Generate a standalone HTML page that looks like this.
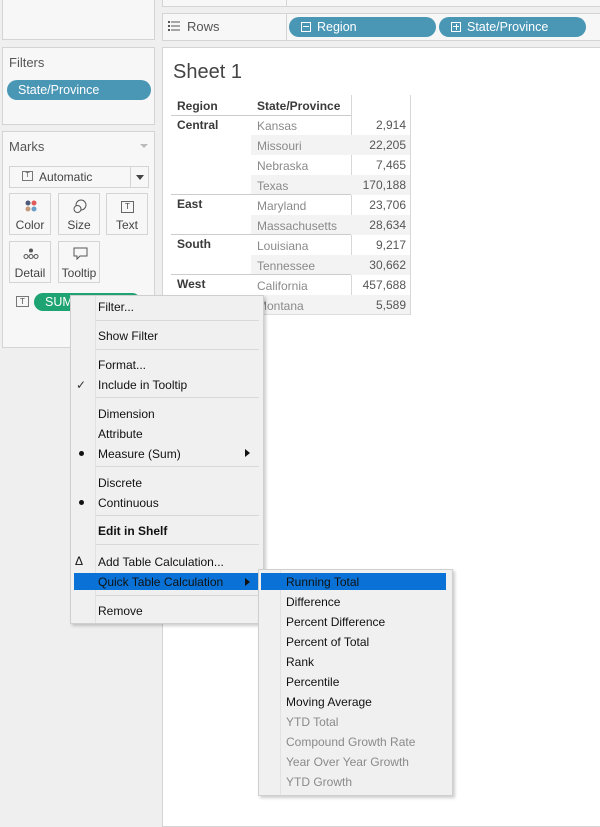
<!DOCTYPE html><html><head><style>
*{margin:0;padding:0;box-sizing:border-box}
body{width:600px;height:824px;position:relative;background:#efefef;font-family:"Liberation Sans",sans-serif;font-size:12px;color:#333;overflow:hidden}
.a{position:absolute}
.panel{position:absolute;background:#f7f7f7;border:1px solid #d4d4d4}
.pill{position:absolute;height:20px;border-radius:10px;color:#fff;font-size:12.5px;line-height:20px}
.btn{position:absolute;width:42px;height:42px;border:1px solid #d4d4d4;background:#f7f7f7;text-align:center;font-size:12px;color:#444}
.btn span{position:absolute;left:0;right:0;top:24px}
.t{position:absolute;font-size:12px;white-space:nowrap}
.b{font-weight:bold;color:#3a3a3a}
.m{position:absolute;left:98px;font-size:12px;color:#111;white-space:nowrap}
.sep{position:absolute;left:96px;width:163px;height:1px;background:#d8d8d8}
.s{position:absolute;left:286px;font-size:12px;color:#111;white-space:nowrap}
.g{color:#8a8a8a}
</style></head><body>
<div class="panel" style="left:2px;top:-2px;width:153px;height:42px"></div>
<div class="panel" style="left:162px;top:-2px;width:440px;height:9px;background:#f7f7f7"></div>
<div class="a" style="left:286px;top:-2px;width:1px;height:9px;background:#d4d4d4"></div>
<div class="panel" style="left:162px;top:13px;width:440px;height:28px"></div>
<div class="a" style="left:286px;top:14px;width:1px;height:26px;background:#d4d4d4"></div>
<svg class="a" style="left:168px;top:21px" width="12" height="10"><g fill="#555"><rect x="0" y="0" width="2" height="2"/><rect x="0" y="4" width="2" height="2"/><rect x="0" y="8" width="2" height="2"/><rect x="3" y="0.5" width="9" height="1"/><rect x="3" y="4.5" width="9" height="1"/><rect x="3" y="8.5" width="9" height="1"/></g></svg>
<div class="t" style="left:187px;top:19px;font-size:13px;color:#555">Rows</div>
<div class="pill" style="left:289px;top:17px;width:147px;background:#4a96b5"><span style="position:absolute;left:12px;top:5px;width:10px;height:10px;border:1px solid #fff"></span><span style="position:absolute;left:14px;top:9px;width:6px;height:1px;background:#fff"></span><span style="position:absolute;left:28px">Region</span></div>
<div class="pill" style="left:439px;top:17px;width:147px;background:#4a96b5"><span style="position:absolute;left:12px;top:5px;width:10px;height:10px;border:1px solid #fff"></span><span style="position:absolute;left:14px;top:9px;width:6px;height:1px;background:#fff"></span><span style="position:absolute;left:16.5px;top:6.5px;width:1px;height:6px;background:#fff"></span><span style="position:absolute;left:28px">State/Province</span></div>

<div class="panel" style="left:2px;top:47px;width:153px;height:78px"></div>
<div class="t" style="left:9px;top:55px;font-size:13px;color:#555">Filters</div>
<div class="pill" style="left:7px;top:80px;width:144px;background:#4a96b5"><span style="position:absolute;left:11px">State/Province</span></div>

<div class="panel" style="left:2px;top:131px;width:153px;height:217px"></div>
<div class="t" style="left:9px;top:139px;font-size:13px;color:#555">Marks</div>
<div class="a" style="left:140px;top:144px;border:4px solid transparent;border-top:4px solid #bbb"></div>
<div class="a" style="left:9px;top:166px;width:140px;height:22px;border:1px solid #d4d4d4;background:#f7f7f7"></div>
<div class="a" style="left:130px;top:167px;width:1px;height:20px;background:#d4d4d4"></div>
<div class="a" style="left:136px;top:175px;border:4px solid transparent;border-top:5px solid #444"></div>
<div class="a" style="left:22px;top:171px;width:11px;height:10px;border:1px solid #777;font-size:7px;line-height:8px;text-align:center;color:#555">T</div>
<div class="t" style="left:39px;top:170px;color:#444">Automatic</div>
<div class="btn" style="left:9px;top:193px"><svg style="position:absolute;left:15px;top:6px" width="12" height="12"><circle cx="3" cy="3" r="2.5" fill="#4e5a7a"/><circle cx="9" cy="3" r="2.5" fill="#e05a5a"/><circle cx="3" cy="9" r="2.5" fill="#c49a7a"/><circle cx="9" cy="9" r="2.5" fill="#6aa0c8"/></svg><span>Color</span></div>
<div class="btn" style="left:58px;top:193px"><svg style="position:absolute;left:14px;top:5px" width="14" height="14"><circle cx="8" cy="6" r="5" fill="none" stroke="#555"/><circle cx="4.5" cy="10" r="3.5" fill="#f7f7f7" stroke="#555"/></svg><span>Size</span></div>
<div class="btn" style="left:106px;top:193px"><div style="position:absolute;left:14px;top:7px;width:13px;height:12px;border:1px solid #666;font-size:8px;line-height:10px">T</div><span>Text</span></div>
<div class="btn" style="left:9px;top:241px"><svg style="position:absolute;left:13px;top:6px" width="16" height="12"><circle cx="8" cy="2.5" r="2" fill="#555"/><circle cx="3" cy="8.5" r="2" fill="none" stroke="#555"/><circle cx="8" cy="8.5" r="2" fill="none" stroke="#555"/><circle cx="13" cy="8.5" r="2" fill="none" stroke="#555"/></svg><span>Detail</span></div>
<div class="btn" style="left:58px;top:241px"><svg style="position:absolute;left:14px;top:5px" width="16" height="14"><path d="M1 1h13v8h-7l-3 3v-3h-3z" fill="none" stroke="#555"/></svg><span>Tooltip</span></div>
<div class="a" style="left:16px;top:296px;width:13px;height:11px;border:1px solid #777;font-size:8px;line-height:9px;text-align:center;color:#555">T</div>
<div class="pill" style="left:34px;top:293px;width:107px;height:18px;line-height:18px;background:#1ea373"><span style="position:absolute;left:11px">SUM</span></div>

<div class="a" style="left:162px;top:47px;width:440px;height:780px;background:#fff;border:1px solid #d4d4d4"></div>
<div class="t" style="left:173px;top:61px;font-size:20px;color:#444">Sheet 1</div>
<div class="a" style="left:351px;top:95px;width:1px;height:220px;background:#d8d8d8"></div>
<div class="a" style="left:410px;top:95px;width:1px;height:220px;background:#d8d8d8"></div>
<div class="t b" style="left:177px;top:99px">Region</div>
<div class="t b" style="left:257px;top:99px">State/Province</div>
<div class="a" style="left:171px;top:115px;width:180px;height:1px;background:#ccc"></div>
<div class="a" style="left:251px;top:135px;width:159px;height:20px;background:#f3f3f3"></div>
<div class="a" style="left:251px;top:175px;width:159px;height:20px;background:#f3f3f3"></div>
<div class="a" style="left:251px;top:215px;width:159px;height:20px;background:#f3f3f3"></div>
<div class="a" style="left:251px;top:255px;width:159px;height:20px;background:#f3f3f3"></div>
<div class="a" style="left:251px;top:295px;width:159px;height:20px;background:#f3f3f3"></div>
<div class="a" style="left:171px;top:194px;width:180px;height:1px;background:#ccc"></div>
<div class="a" style="left:171px;top:234px;width:180px;height:1px;background:#ccc"></div>
<div class="a" style="left:171px;top:274px;width:180px;height:1px;background:#ccc"></div>
<div class="a" style="left:251px;top:314px;width:160px;height:1px;background:#ddd"></div>
<div class="t b" style="left:177px;top:118px">Central</div>
<div class="t b" style="left:177px;top:197px">East</div>
<div class="t b" style="left:177px;top:237px">South</div>
<div class="t b" style="left:177px;top:277px">West</div>
<div class="t g" style="left:257px;top:119px">Kansas</div><div class="t" style="right:194px;top:118px;color:#555">2,914</div>
<div class="t g" style="left:257px;top:139px">Missouri</div><div class="t" style="right:194px;top:138px;color:#555">22,205</div>
<div class="t g" style="left:257px;top:159px">Nebraska</div><div class="t" style="right:194px;top:158px;color:#555">7,465</div>
<div class="t g" style="left:257px;top:179px">Texas</div><div class="t" style="right:194px;top:178px;color:#555">170,188</div>
<div class="t g" style="left:257px;top:199px">Maryland</div><div class="t" style="right:194px;top:198px;color:#555">23,706</div>
<div class="t g" style="left:257px;top:219px">Massachusetts</div><div class="t" style="right:194px;top:218px;color:#555">28,634</div>
<div class="t g" style="left:257px;top:239px">Louisiana</div><div class="t" style="right:194px;top:238px;color:#555">9,217</div>
<div class="t g" style="left:257px;top:259px">Tennessee</div><div class="t" style="right:194px;top:258px;color:#555">30,662</div>
<div class="t g" style="left:257px;top:279px">California</div><div class="t" style="right:194px;top:278px;color:#555">457,688</div>
<div class="t g" style="left:257px;top:299px">Montana</div><div class="t" style="right:194px;top:298px;color:#555">5,589</div>

<div class="a" style="left:70px;top:295px;width:194px;height:329px;background:#f0f0f0;border:1px solid #cfcfcf;box-shadow:2px 2px 3px rgba(0,0,0,.2)"></div>
<div class="a" style="left:95px;top:296px;width:1px;height:327px;background:#e2e2e2"></div>
<div class="m" style="top:300px">Filter...</div>
<div class="sep" style="top:320px"></div>
<div class="m" style="top:329px">Show Filter</div>
<div class="sep" style="top:349px"></div>
<div class="m" style="top:358px">Format...</div>
<div class="t" style="left:76px;top:378px;color:#333">✓</div>
<div class="m" style="top:378px">Include in Tooltip</div>
<div class="sep" style="top:397px"></div>
<div class="m" style="top:407px">Dimension</div>
<div class="m" style="top:427px">Attribute</div>
<div class="a" style="left:79px;top:451px;width:5px;height:5px;border-radius:50%;background:#111"></div>
<div class="m" style="top:447px">Measure (Sum)</div>
<div class="a" style="left:245px;top:449px;border:4px solid transparent;border-left:5px solid #111"></div>
<div class="sep" style="top:466px"></div>
<div class="m" style="top:476px">Discrete</div>
<div class="a" style="left:79px;top:500px;width:5px;height:5px;border-radius:50%;background:#111"></div>
<div class="m" style="top:496px">Continuous</div>
<div class="sep" style="top:515px"></div>
<div class="m" style="top:524px;font-weight:bold">Edit in Shelf</div>
<div class="sep" style="top:544px"></div>
<div class="t" style="left:75px;top:554px;color:#111">Δ</div>
<div class="m" style="top:555px">Add Table Calculation...</div>
<div class="a" style="left:74px;top:573px;width:186px;height:17px;background:#0a72d6"></div>
<div class="m" style="top:575px;color:#111">Quick Table Calculation</div>
<div class="a" style="left:245px;top:578px;border:4px solid transparent;border-left:5px solid #111"></div>
<div class="sep" style="top:595px"></div>
<div class="m" style="top:604px">Remove</div>

<div class="a" style="left:258px;top:569px;width:195px;height:227px;background:#f0f0f0;border:1px solid #cfcfcf;box-shadow:2px 2px 3px rgba(0,0,0,.2)"></div>
<div class="a" style="left:280px;top:570px;width:1px;height:225px;background:#e2e2e2"></div>
<div class="a" style="left:261px;top:573px;width:185px;height:17px;background:#0a72d6"></div>
<div class="s" style="top:575px">Running Total</div>
<div class="s" style="top:595px">Difference</div>
<div class="s" style="top:615px">Percent Difference</div>
<div class="s" style="top:635px">Percent of Total</div>
<div class="s" style="top:655px">Rank</div>
<div class="s" style="top:675px">Percentile</div>
<div class="s" style="top:695px">Moving Average</div>
<div class="s g" style="top:715px">YTD Total</div>
<div class="s g" style="top:735px">Compound Growth Rate</div>
<div class="s g" style="top:755px">Year Over Year Growth</div>
<div class="s g" style="top:775px">YTD Growth</div>
</body></html>
